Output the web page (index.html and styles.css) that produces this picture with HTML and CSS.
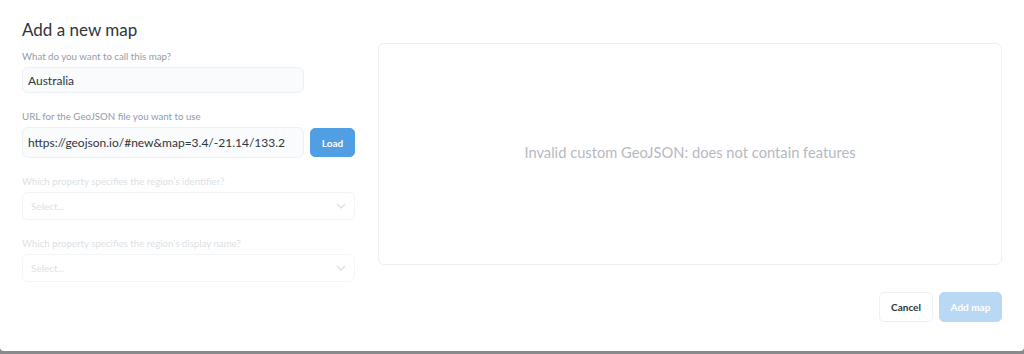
FILE: index.html
```html
<!DOCTYPE html>
<html>
<head>
<meta charset="utf-8">
<link rel="stylesheet" href="styles.css">
</head>
<body>
<div class="modal">
  <h2 class="title">Add a new map</h2>
  <div class="content">
    <div class="form">
      <div class="field">
        <label class="label">What do you want to call this map?</label>
        <div class="input name">Australia</div>
      </div>
      <div class="field">
        <label class="label">URL for the GeoJSON file you want to use</label>
        <div class="row">
          <div class="input url">https://geojson.io/#new&amp;map=3.4/-21.14/133.2</div>
          <button class="btn primary">Load</button>
        </div>
      </div>
      <div class="field disabled">
        <label class="label">Which property specifies the region’s identifier?</label>
        <div class="select"><span>Select...</span>
          <svg width="10" height="6" viewBox="0 0 10 6"><path d="M1 1l4 4 4-4" fill="none" stroke="#dcdfe5" stroke-width="1.3"/></svg>
        </div>
      </div>
      <div class="field disabled">
        <label class="label">Which property specifies the region’s display name?</label>
        <div class="select"><span>Select...</span>
          <svg width="10" height="6" viewBox="0 0 10 6"><path d="M1 1l4 4 4-4" fill="none" stroke="#dcdfe5" stroke-width="1.3"/></svg>
        </div>
      </div>
    </div>
    <div class="preview">Invalid custom GeoJSON: does not contain features</div>
  </div>
  <div class="footer">
    <button class="btn cancel">Cancel</button>
    <button class="btn add">Add map</button>
  </div>
</div>
</body>
</html>
```
FILE: styles.css
```css
html, body {
  margin: 0;
  padding: 0;
  height: 354px;
  background: #888a8c;
  font-family: Lato, "Open Sans", sans-serif;
}
.modal {
  box-sizing: border-box;
  height: 351px;
  background: #fff;
  border-radius: 0 0 4px 4px;
  padding: 19px 22px 0 22px;
}
.title {
  margin: 0;
  font-size: 17px;
  font-weight: 400;
  color: #2e353b;
  line-height: 22px;
}
.content {
  display: flex;
  align-items: flex-start;
  gap: 23px;
  margin-top: 2px;
}
.form {
  width: 333px;
  display: flex;
  flex-direction: column;
}
.field {
  display: flex;
  flex-direction: column;
}
.label {
  font-size: 9.7px;
  color: #949aab;
  line-height: 12px;
  margin-top: 7px;
  margin-bottom: 5px;
}
.field + .field .label { margin-top: 17px; }
.input {
  box-sizing: border-box;
  background: #f9fbfc;
  border: 1px solid #eef0f3;
  border-radius: 6px;
  color: #2e353b;
  font-size: 12px;
  padding: 0 5px;
  display: flex;
  align-items: center;
}
.name { width: 282px; height: 26px; }
.url { width: 282px; height: 31px; }
.row { display: flex; gap: 6px; align-items: center; }
.btn {
  font-family: Lato, sans-serif;
  font-weight: 700;
  font-size: 10px;
  border-radius: 5px;
  cursor: pointer;
}
.primary {
  width: 45px;
  height: 29px;
  background: #509ee3;
  border: 1px solid #509ee3;
  color: #fff;
}
.select {
  box-sizing: border-box;
  height: 28px;
  border: 1px solid #f3f4f6;
  border-radius: 6px;
  display: flex;
  align-items: center;
  justify-content: space-between;
  padding: 0 8px 0 8px;
  font-size: 10px;
  color: #dcdfe4;
}
.disabled .label { color: #dcdfe4; }
.preview {
  box-sizing: border-box;
  width: 624px;
  height: 222px;
  border: 1px solid #eeeff2;
  border-radius: 6px;
  display: flex;
  align-items: center;
  justify-content: center;
  font-size: 14.7px;
  color: #b6b9c2;
  padding-bottom: 4px;
}
.footer {
  display: flex;
  justify-content: flex-end;
  gap: 6px;
  margin-top: 10px;
}
.cancel {
  width: 54px;
  height: 30px;
  background: #fff;
  border: 1px solid #eef0f3;
  color: #2e353b;
}
.add {
  width: 63px;
  height: 30px;
  background: #b9d8f4;
  border: 1px solid #b9d8f4;
  color: #fff;
}
```
